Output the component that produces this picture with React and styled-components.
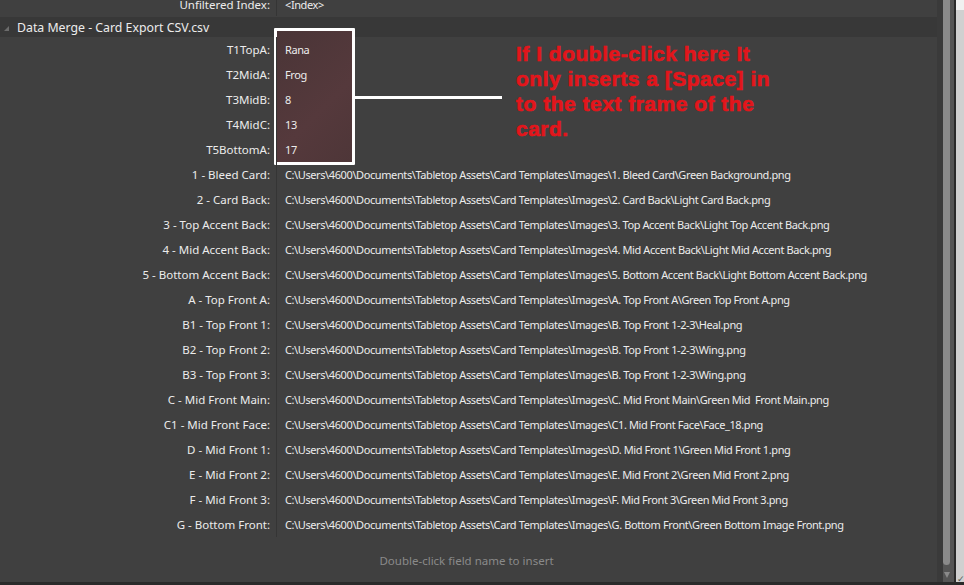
import styled, { createGlobalStyle } from "styled-components";

const GlobalStyle = createGlobalStyle`
  html, body {
    margin: 0;
    padding: 0;
    background: #404040;
    overflow: hidden;
  }
`;

const Window = styled.div`
  position: relative;
  width: 964px;
  height: 585px;
  display: flex;
  background: #404040;
  font-family: "Noto Sans", "Open Sans", sans-serif;
  color: #ececec;
  overflow: hidden;
  border-bottom: 3px solid #2a2a2a;
  box-sizing: border-box;
`;

const Panel = styled.div`
  position: relative;
  flex: 0 0 937px;
  display: flex;
  flex-direction: column;
  overflow: hidden;
`;

const Scroller = styled.div`
  margin-top: -8px;
`;

const Row = styled.div`
  display: grid;
  grid-template-columns: 276px 1fr;
  height: ${(p) => p.$h || 25}px;
  align-items: stretch;
`;

const Label = styled.div`
  display: flex;
  align-items: center;
  justify-content: flex-end;
  padding-right: 6px;
  white-space: nowrap;
  font-size: 11.5px;
`;

const Value = styled.div`
  display: flex;
  align-items: center;
  padding-left: 8px;
  border-left: 1px solid #353535;
  white-space: pre;
  font-size: 11px;
  letter-spacing: -0.4px;
`;

const SectionHeader = styled.div`
  display: flex;
  align-items: center;
  gap: 8px;
  height: 20px;
  margin-top: 1px;
  padding-left: 4px;
  background: #383838;
  font-size: 12.3px;
`;

const Triangle = styled.span`
  width: 0;
  height: 0;
  border-left: 5px solid transparent;
  border-bottom: 5px solid #6c6c6c;
  margin-top: 3px;
`;

const Hint = styled.div`
  text-align: center;
  color: #8a8a8a;
  font-size: 11.5px;
  margin-top: 16px;
  padding-right: 4px;
`;

const Highlight = styled.div`
  position: absolute;
  left: 274px;
  top: 28px;
  width: 75px;
  height: 131px;
  border: 3px solid #ffffff;
  border-radius: 1px;
  background: linear-gradient(135deg, #4a3537 0%, #55393c 60%, #4e3638 100%);
  pointer-events: none;
`;

const Connector = styled.div`
  position: absolute;
  left: 355px;
  top: 96px;
  width: 147px;
  height: 3px;
  background: #ffffff;
`;

const Note = styled.div`
  position: absolute;
  left: 516px;
  top: 41px;
  width: 264px;
  font-family: "Liberation Sans", Arial, sans-serif;
  font-weight: bold;
  font-size: 21px;
  line-height: 25px;
  color: #e3151b;
  letter-spacing: 0.5px;
  -webkit-text-stroke: 0.6px #e3151b;
`;

const Values = styled.div`
  position: relative;
  z-index: 1;
`;

const Scrollbar = styled.div`
  flex: 0 0 19px;
  display: flex;
  background: #3a3a3a;
`;

const Track = styled.div`
  position: relative;
  width: 13px;
  margin-left: 6px;
  background: #555555;
  border-right: 2px solid #2a2a2a;
  box-sizing: border-box;
`;

const Thumb = styled.div`
  width: 7px;
  height: 565px;
  background: #8a8a8a;
  border-radius: 0 0 4px 4px;
`;

const ArrowDown = styled.div`
  position: absolute;
  left: 1px;
  top: 572px;
  width: 0;
  height: 0;
  border-left: 3px solid transparent;
  border-right: 3px solid transparent;
  border-top: 6px solid #8a8a8a;
`;

const Strip = styled.div`
  flex: 1;
  background: linear-gradient(#f0f0f0 0 10px, #d0d0d0 10px 100%);
  position: relative;
`;

const Check = styled.span`
  position: absolute;
  left: 1px;
  top: 572px;
  font-size: 9px;
  color: #555;
`;

const base = "C:\\Users\\4600\\Documents\\Tabletop Assets\\Card Templates\\Images\\";

const rows = [
  ["T1TopA:", "Rana"],
  ["T2MidA:", "Frog"],
  ["T3MidB:", "8"],
  ["T4MidC:", "13"],
  ["T5BottomA:", "17"],
  ["1 - Bleed Card:", base + "1. Bleed Card\\Green Background.png"],
  ["2 - Card Back:", base + "2. Card Back\\Light Card Back.png"],
  ["3 - Top Accent Back:", base + "3. Top Accent Back\\Light Top Accent Back.png"],
  ["4 - Mid Accent Back:", base + "4. Mid Accent Back\\Light Mid Accent Back.png"],
  ["5 - Bottom Accent Back:", base + "5. Bottom Accent Back\\Light Bottom Accent Back.png"],
  ["A - Top Front A:", base + "A. Top Front A\\Green Top Front A.png"],
  ["B1 - Top Front 1:", base + "B. Top Front 1-2-3\\Heal.png"],
  ["B2 - Top Front 2:", base + "B. Top Front 1-2-3\\Wing.png"],
  ["B3 - Top Front 3:", base + "B. Top Front 1-2-3\\Wing.png"],
  ["C - Mid Front Main:", base + "C. Mid Front Main\\Green Mid  Front Main.png"],
  ["C1 - Mid Front Face:", base + "C1. Mid Front Face\\Face_18.png"],
  ["D - Mid Front 1:", base + "D. Mid Front 1\\Green Mid Front 1.png"],
  ["E - Mid Front 2:", base + "E. Mid Front 2\\Green Mid Front 2.png"],
  ["F - Mid Front 3:", base + "F. Mid Front 3\\Green Mid Front 3.png"],
  ["G - Bottom Front:", base + "G. Bottom Front\\Green Bottom Image Front.png"],
];

export default function App() {
  return (
    <>
      <GlobalStyle />
      <Window>
        <Panel>
          <Scroller>
            <Row $h={24}>
              <Label>Unfiltered Index:</Label>
              <Value>&lt;Index&gt;</Value>
            </Row>
            <SectionHeader>
              <Triangle />
              Data Merge - Card Export CSV.csv
            </SectionHeader>
            <Values>
              {rows.map(([label, value], i) => (
                <Row key={i}>
                  <Label>{label}</Label>
                  <Value>{value}</Value>
                </Row>
              ))}
            </Values>
            <Hint>Double-click field name to insert</Hint>
          </Scroller>
          <Highlight />
          <Connector />
          <Note>
            If I double-click here It only inserts a [Space] in to the text frame of the card.
          </Note>
        </Panel>
        <Scrollbar>
          <Track>
            <Thumb />
            <ArrowDown />
          </Track>
        </Scrollbar>
        <Strip>
          <Check>✓</Check>
        </Strip>
      </Window>
    </>
  );
}
